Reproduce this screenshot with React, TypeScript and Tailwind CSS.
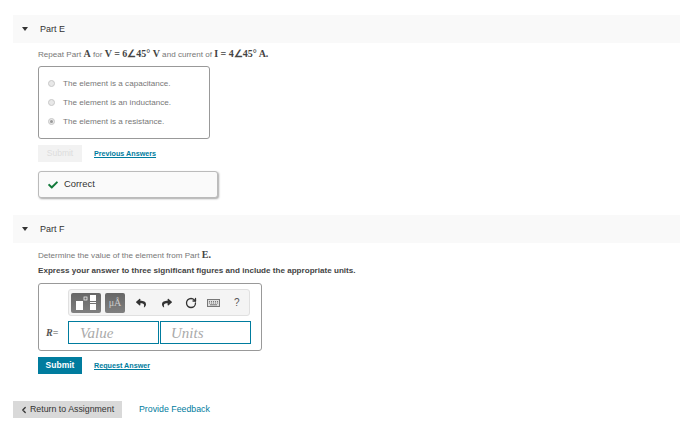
import React from 'react';
import { ChevronLeft, RotateCw } from 'lucide-react';
import { FaCheck, FaReply, FaShare } from 'react-icons/fa';

const sans = "font-['Liberation_Sans',Arial,sans-serif]";
const serif = "font-['Liberation_Serif','Times_New_Roman',serif]";

const M: React.FC<{ children: React.ReactNode }> = ({ children }) => (
  <span className={`${serif} font-bold text-[10px] text-[#444]`}>{children}</span>
);

const PartHeader: React.FC<{ title: string }> = ({ title }) => (
  <div className="ml-[13px] h-[28px] bg-[#f9f9f9] flex items-center">
    <span className="ml-[9px] w-0 h-0 border-x-[3px] border-x-transparent border-t-[4px] border-t-[#333]" />
    <span className="ml-[12px] pt-[2px] text-[9px] text-[#333]">{title}</span>
  </div>
);

const Radio: React.FC<{ label: string; checked?: boolean }> = ({ label, checked }) => (
  <div className="h-[19px] flex items-center">
    <span className="w-[7px] h-[7px] rounded-full bg-[#e8e8e8] border border-[#c8c8c8] flex items-center justify-center">
      {checked && <span className="w-[3px] h-[3px] rounded-full bg-[#999]" />}
    </span>
    <span className="ml-[8px] pt-[2px] text-[8.1px] text-[#777]">{label}</span>
  </div>
);

const App: React.FC = () => {
  return (
    <div className={`${sans} w-[680px] h-[422px] bg-white overflow-hidden pt-[15px]`}>
      <PartHeader title="Part E" />

      <div className="ml-[38px]">
        <p className="mt-[4px] h-[14px] leading-[14px] text-[8.1px] text-[#777] whitespace-nowrap">
          Repeat Part <M>A</M> for <M>V</M> <M>= 6∠45° V</M> and current of <M>I</M> <M>= 4∠45° A</M><M>.</M>
        </p>

        <div className="mt-[5px] w-[172px] h-[73px] border border-[#999] rounded-[3px] pl-[9px] pt-[7px]">
          <Radio label="The element is a capacitance." />
          <Radio label="The element is an inductance." />
          <Radio label="The element is a resistance." checked />
        </div>

        <div className="mt-[6px] flex items-center">
          <span className="w-[44px] h-[17px] bg-[#f2f2f2] text-[#ddd] text-[8.5px] flex items-center justify-center">Submit</span>
          <a className="ml-[12px] pt-[2px] text-[7.2px] font-bold text-[#007c9e] underline">Previous Answers</a>
        </div>

        <div className="mt-[9px] w-[180px] h-[27px] bg-[#fafafa] border border-[#bbb] rounded-[3px] shadow-[1px_1px_2px_rgba(0,0,0,0.35)] flex items-center pl-[9px]">
          <FaCheck size={10} className="text-[#12793a]" />
          <span className="ml-[6px] text-[9.4px] text-[#333]">Correct</span>
        </div>
      </div>

      <div className="mt-[17px]">
        <PartHeader title="Part F" />
      </div>

      <div className="ml-[38px]">
        <p className="mt-[5px] h-[14px] leading-[14px] text-[8.1px] text-[#777] whitespace-nowrap">
          Determine the value of the element from Part <M>E</M><M>.</M>
        </p>
        <p className="mt-[2px] h-[14px] leading-[14px] text-[8.1px] font-bold text-[#444] whitespace-nowrap">
          Express your answer to three significant figures and include the appropriate units.
        </p>

        <div className="mt-[5px] w-[224px] h-[68px] border border-[#999] rounded-[3px] pt-[5px]">
          <div className="ml-[29px] w-[182px] h-[27px] bg-[#f4f4f4] border border-[#e0e0e0] rounded-[3px] flex items-center pl-[2px] text-[#333]">
            <span className="w-[30px] h-[20px] rounded-[2px] bg-gradient-to-b from-[#666] to-[#808080] flex items-end justify-center gap-[1px] pb-[3px]">
              <svg width="26" height="15" viewBox="0 0 26 15">
                <rect x="3" y="6" width="7" height="9" fill="#fff" />
                <rect x="11" y="2" width="3" height="3" fill="none" stroke="#fff" strokeWidth="0.7" />
                <rect x="17" y="0" width="6" height="6" fill="#fff" />
                <rect x="17" y="7" width="6" height="1" fill="#fff" />
                <rect x="17" y="9" width="6" height="6" fill="#fff" />
              </svg>
            </span>
            <span className={`${serif} ml-[4px] w-[20px] h-[20px] rounded-[2px] bg-gradient-to-b from-[#666] to-[#808080] text-[#ccc] text-[10px] flex items-center justify-center`}>
              μÅ
            </span>
            <FaReply size={10} className="ml-[11px]" />
            <FaShare size={10} className="ml-[16px]" />
            <RotateCw size={12} strokeWidth={2.6} className="ml-[13px]" />
            <svg width="13" height="8" viewBox="0 0 13 8" className="ml-[10px]">
              <rect x="0.5" y="0.5" width="12" height="7" fill="#ddd" stroke="#777" />
              <path d="M2 2.5h9M2 4h9" stroke="#777" strokeDasharray="1 1" />
              <path d="M3 5.8h7" stroke="#777" />
            </svg>
            <span className="ml-[14px] text-[10px] text-[#555]">?</span>
          </div>
          <div className="mt-[5px] flex items-center">
            <span className={`${serif} ml-[7px] w-[22px] text-[10px] text-[#555]`}>
              <b><i>R</i></b>=
            </span>
            <span className={`${serif} italic w-[91px] h-[23px] border border-[#007c9e] text-[15px] text-[#aaa] flex items-center pl-[11px] pt-[2px]`}>Value</span>
            <span className={`${serif} italic ml-[1px] w-[91px] h-[23px] border border-[#007c9e] text-[15px] text-[#aaa] flex items-center pl-[10px] pt-[2px]`}>Units</span>
          </div>
        </div>

        <div className="mt-[6px] flex items-center">
          <span className="w-[44px] h-[17px] bg-[#007c9e] text-white text-[8.5px] font-bold flex items-center justify-center">Submit</span>
          <a className="ml-[12px] pt-[2px] text-[7.2px] font-bold text-[#007c9e] underline">Request Answer</a>
        </div>
      </div>

      <div className="mt-[27px] ml-[13px] flex items-center">
        <span className="w-[109px] h-[17px] bg-[#d9d9d9] text-[8.8px] text-[#333] flex items-center pl-[6px]">
          <ChevronLeft size={10} strokeWidth={3} />
          <span className="ml-[1px]">Return to Assignment</span>
        </span>
        <a className="ml-[17px] text-[8.8px] text-[#007c9e]">Provide Feedback</a>
      </div>
    </div>
  );
};

export default App;
